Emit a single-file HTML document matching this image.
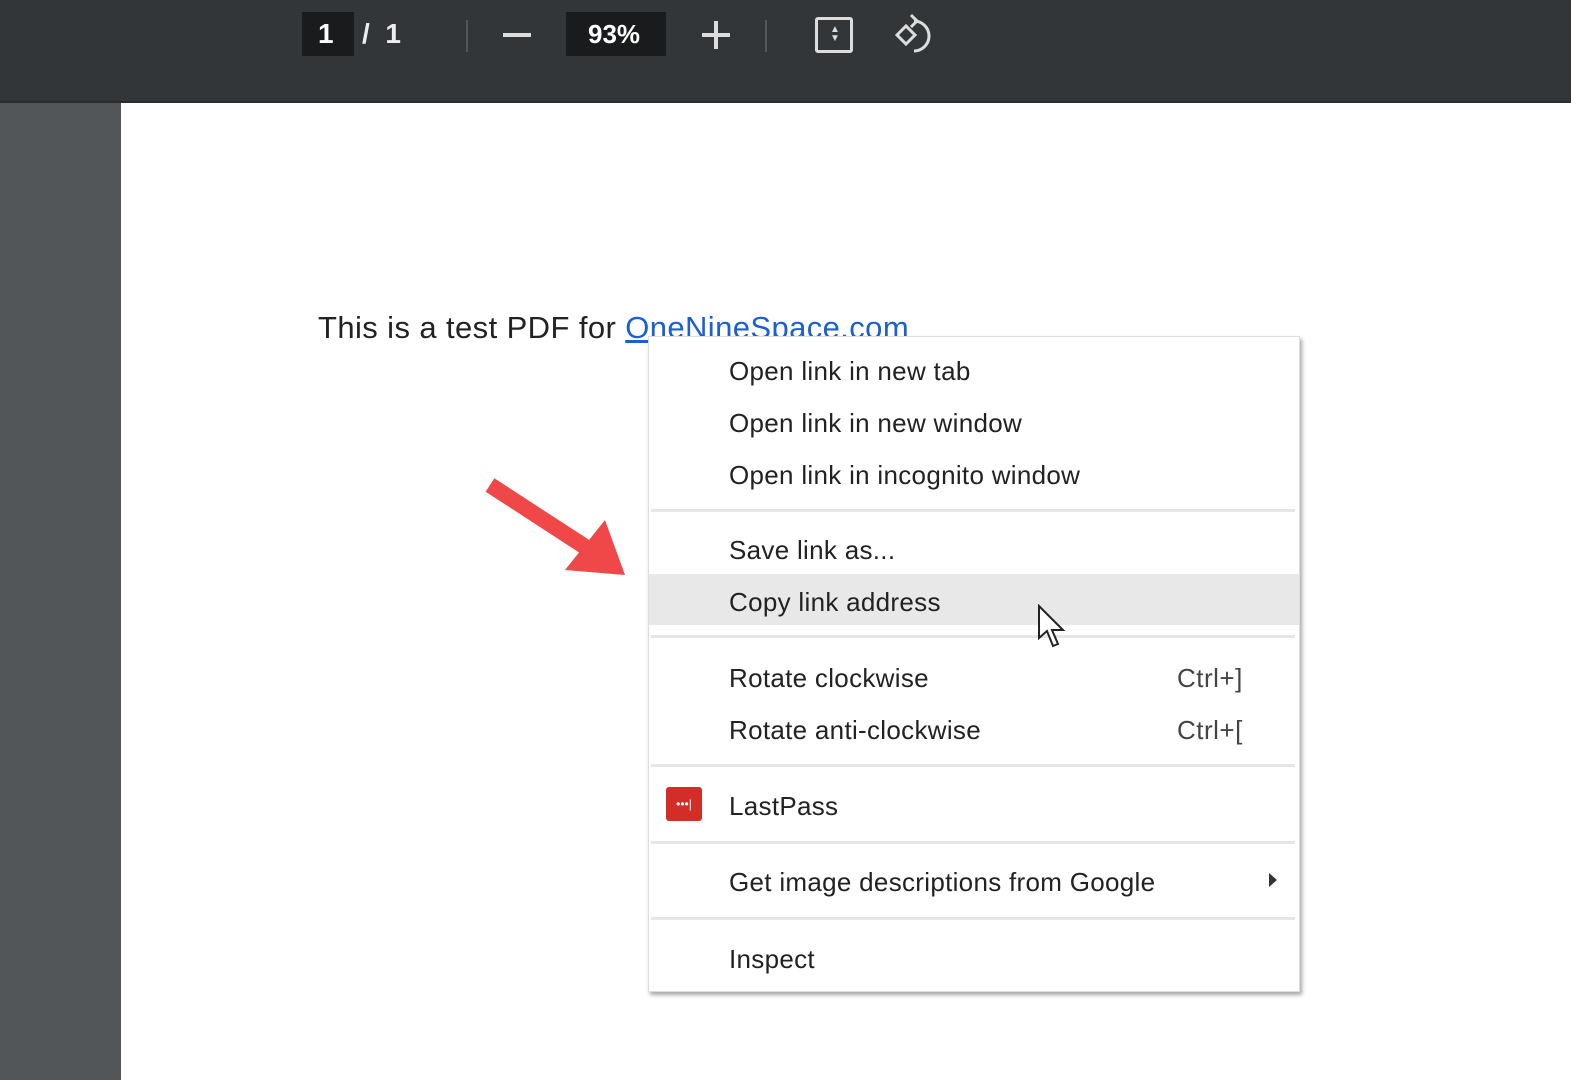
<!DOCTYPE html>
<html><head><style>
body{margin:0;width:1571px;height:1080px;overflow:hidden;background:#525659;font-family:"Liberation Sans",sans-serif;position:relative}
.tb{position:absolute;left:0;top:0;width:1571px;height:101px;background:#323639;border-bottom:2px solid #2a2c2e}
.page{position:absolute;left:121px;top:103px;width:1450px;height:977px;background:#fff}
.a{position:absolute}
.menu{position:absolute;left:648px;top:336px;width:650px;height:654px;background:#fff;box-shadow:2px 3px 4px rgba(0,0,0,.35);border:1px solid #ddd}
.it{position:absolute;left:80px;font-size:26px;letter-spacing:0.3px;color:#222;line-height:30px}
.sc{position:absolute;left:528px;font-size:26px;letter-spacing:0.5px;color:#444}
.sep{position:absolute;left:2px;right:4px;height:3px;background:#e6e6e6}
</style></head><body>
<div class="tb">
 <div class="a" style="left:302px;top:12px;width:52px;height:44px;background:#191b1c"></div>
 <div class="a" style="left:318px;top:18px;color:#fff;font-size:28px;font-weight:bold">1</div>
 <div class="a" style="left:362px;top:18px;color:#eee;font-size:28px;font-weight:bold">/&nbsp; 1</div>
 <div class="a" style="left:466px;top:20px;width:2px;height:32px;background:#555"></div>
 <div class="a" style="left:503px;top:33px;width:28px;height:4px;background:#ddd"></div>
 <div class="a" style="left:566px;top:12px;width:100px;height:44px;background:#191b1c"></div>
 <div class="a" style="left:588px;top:19px;color:#fff;font-size:26px;font-weight:bold">93%</div>
 <div class="a" style="left:702px;top:33px;width:28px;height:4px;background:#ddd"></div>
 <div class="a" style="left:714px;top:21px;width:4px;height:28px;background:#ddd"></div>
 <div class="a" style="left:765px;top:20px;width:2px;height:32px;background:#555"></div>
 <div class="a" style="left:815px;top:17px;width:38px;height:36px;border:3px solid #ddd;border-radius:3px;box-sizing:border-box"></div>
 <div class="a" style="left:830px;top:25px;color:#ddd;font-size:10px;line-height:9px">▲<br>▼</div>
 <svg class="a" style="left:892px;top:12px" width="46" height="46"><path d="M5 23 L14 14 L23 23 L14 32 Z" fill="none" stroke="#ddd" stroke-width="3"/><path d="M22 9 A14 14 0 1 1 22 39" fill="none" stroke="#ddd" stroke-width="3"/><path d="M19 3 L25 9 L19 15" fill="none" stroke="#ddd" stroke-width="3"/></svg>
</div>
<div class="page"></div>
<div class="a" style="left:318px;top:310px;font-size:31px;letter-spacing:0.4px;color:#222">This is a test PDF for <span style="color:#1a5fd6;text-decoration:underline">OneNineSpace.com</span></div>
<svg class="a" style="left:480px;top:470px" width="160" height="120"><line x1="10" y1="15" x2="110" y2="80" stroke="#f04848" stroke-width="16"/><polygon points="85,100 145,105 125,50" fill="#f04848"/></svg>
<div class="menu">
 <div class="it" style="top:19px">Open link in new tab</div>
 <div class="it" style="top:71px">Open link in new window</div>
 <div class="it" style="top:123px">Open link in incognito window</div>
 <div class="sep" style="top:172px"></div>
 <div class="it" style="top:198px">Save link as...</div>
 <div class="a" style="left:0;right:0;top:237px;height:51px;background:#e8e8e8"></div>
 <div class="it" style="top:250px">Copy link address</div>
 <div class="sep" style="top:298px"></div>
 <div class="it" style="top:326px">Rotate clockwise</div><div class="sc" style="top:326px">Ctrl+]</div>
 <div class="it" style="top:378px">Rotate anti-clockwise</div><div class="sc" style="top:378px">Ctrl+[</div>
 <div class="sep" style="top:427px"></div>
 <div class="a" style="left:17px;top:450px;width:36px;height:34px;background:#d32d27;border-radius:3px;color:#fff;font-size:12px;text-align:center;line-height:34px">•••|</div>
 <div class="it" style="top:454px">LastPass</div>
 <div class="sep" style="top:504px"></div>
 <div class="it" style="top:530px">Get image descriptions from Google</div>
 <div class="a" style="left:620px;top:536px;width:0;height:0;border-left:8px solid #333;border-top:7px solid transparent;border-bottom:7px solid transparent"></div>
 <div class="sep" style="top:580px"></div>
 <div class="it" style="top:607px">Inspect</div>
</div>
<svg class="a" style="left:1036px;top:604px" width="34" height="48"><path d="M3 2 L3 34 L11 27 L17 42 L22 40 L16 26 L27 26 Z" fill="#fff" stroke="#222" stroke-width="2"/></svg>
</body></html>
